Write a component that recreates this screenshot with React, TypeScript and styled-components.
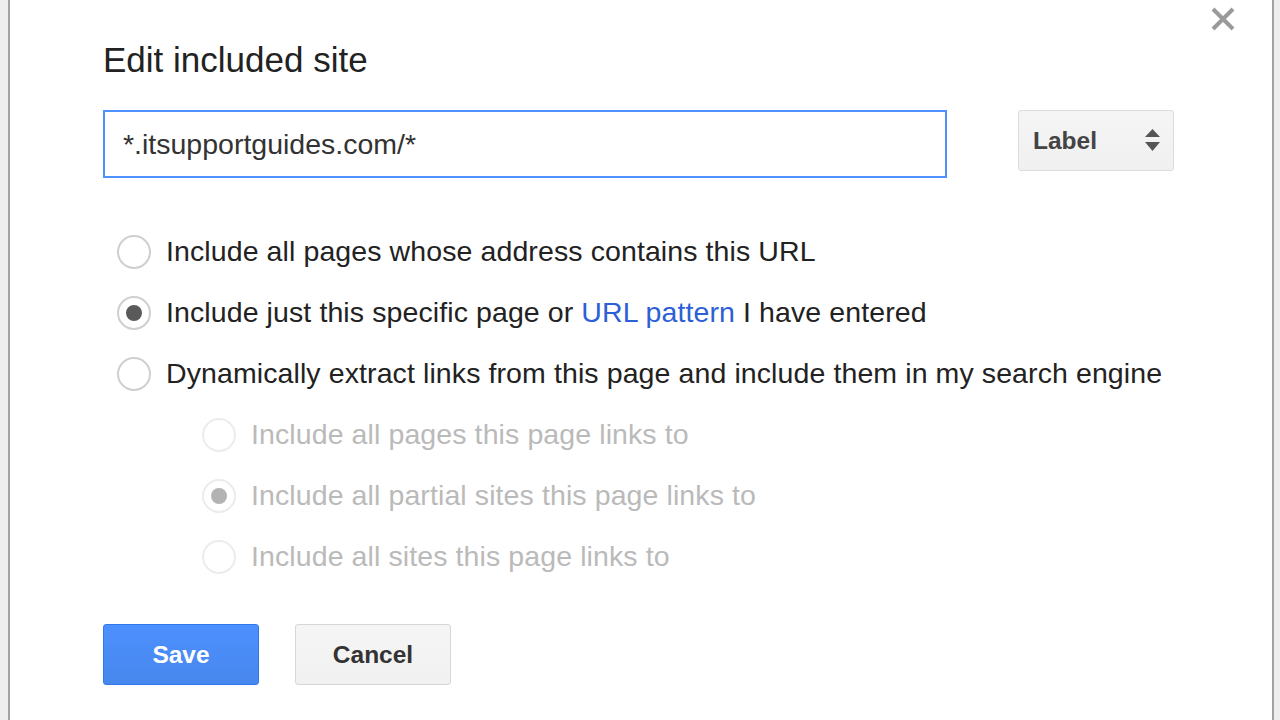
import React from 'react';
import styled, { createGlobalStyle } from 'styled-components';

const GlobalStyle = createGlobalStyle`
    html, body {
        margin: 0;
        padding: 0;
        height: 720px;
        overflow: hidden;
        background-color: #eeeeee;
        font-family: "Liberation Sans", Arial, sans-serif;
    }
`;

const Page = styled.div`
    display: flex;
    height: 720px;
    padding: 0 6px 0 8px;
`;

const Dialog = styled.div`
    position: relative;
    flex: 1;
    background-color: #ffffff;
    border-left: 2px solid #a2a2a2;
    border-right: 2px solid #a2a2a2;
    padding: 40px 0 0 93px;
`;

const CloseButton = styled.button`
    position: absolute;
    top: 6px;
    right: 36px;
    width: 26px;
    height: 26px;
    padding: 0;
    border: none;
    background: none;
    cursor: pointer;
`;

const Title = styled.h1`
    margin: 0;
    font-size: 35px;
    line-height: 40px;
    font-weight: normal;
    color: #222222;
`;

const InputRow = styled.div`
    display: flex;
    align-items: flex-start;
    gap: 71px;
    margin-top: 30px;
`;

const UrlInput = styled.input`
    box-sizing: border-box;
    width: 844px;
    height: 68px;
    padding: 0 0 0 18px;
    border: 2px solid #4d90fe;
    font-family: "Liberation Sans", Arial, sans-serif;
    font-size: 28.5px;
    color: #333333;
    outline: none;
`;

const LabelSelect = styled.div`
    box-sizing: border-box;
    display: flex;
    align-items: center;
    justify-content: space-between;
    width: 156px;
    height: 61px;
    padding: 0 12px 0 14px;
    border: 1px solid #dcdcdc;
    border-radius: 3px;
    background: linear-gradient(#f5f5f5, #f0f0f0);
    font-size: 24.5px;
    font-weight: bold;
    color: #444444;
`;

const Options = styled.div`
    display: flex;
    flex-direction: column;
    margin-top: 43px;
`;

const OptionRow = styled.label<{ $indent?: boolean; $disabled?: boolean }>`
    display: flex;
    align-items: center;
    height: 61px;
    padding-left: ${(p) => (p.$indent ? '99px' : '14px')};
    font-size: 28.5px;
    letter-spacing: 0.1px;
    color: ${(p) => (p.$disabled ? '#bababa' : '#222222')};
`;

const Radio = styled.span<{ $checked?: boolean; $disabled?: boolean }>`
    box-sizing: border-box;
    display: flex;
    align-items: center;
    justify-content: center;
    flex: none;
    width: 34px;
    height: 34px;
    margin-right: 15px;
    border-radius: 50%;
    border: 2px solid ${(p) => (p.$disabled ? '#ececec' : '#cfcfcf')};
    background-color: #ffffff;

    &::after {
        content: '';
        display: ${(p) => (p.$checked ? 'block' : 'none')};
        width: 16px;
        height: 16px;
        border-radius: 50%;
        background-color: ${(p) => (p.$disabled ? '#b3b3b3' : '#5a5a5a')};
    }
`;

const Link = styled.a`
    color: #2d5fd6;
    text-decoration: none;
    margin: 0 0.28em;
`;

const ButtonRow = styled.div`
    display: flex;
    gap: 36px;
    margin-top: 37px;
`;

const Button = styled.button<{ $primary?: boolean }>`
    box-sizing: border-box;
    width: 156px;
    height: 61px;
    border-radius: 3px;
    border: 1px solid ${(p) => (p.$primary ? '#3079ed' : '#d6d6d6')};
    background: ${(p) =>
        p.$primary ? 'linear-gradient(#4d90fe, #4787ed)' : 'linear-gradient(#f5f5f5, #f1f1f1)'};
    color: ${(p) => (p.$primary ? '#ffffff' : '#333333')};
    font-family: "Liberation Sans", Arial, sans-serif;
    font-size: 24.5px;
    font-weight: bold;
    cursor: pointer;
`;

const options = [
    { text: 'Include all pages whose address contains this URL' },
    { text: 'Include just this specific page or', link: 'URL pattern', after: 'I have entered', checked: true },
    { text: 'Dynamically extract links from this page and include them in my search engine' },
];

const subOptions = [
    { text: 'Include all pages this page links to' },
    { text: 'Include all partial sites this page links to', checked: true },
    { text: 'Include all sites this page links to' },
];

const App: React.FC = () => {
    return (
        <>
            <GlobalStyle />
            <Page>
                <Dialog>
                    <CloseButton aria-label="Close">
                        <svg width="26" height="26" viewBox="0 0 26 26">
                            <path d="M3 3 L23 23 M23 3 L3 23" stroke="#9a9a9a" strokeWidth="4" />
                        </svg>
                    </CloseButton>
                    <Title>Edit included site</Title>
                    <InputRow>
                        <UrlInput defaultValue="*.itsupportguides.com/*" />
                        <LabelSelect>
                            Label
                            <svg width="17" height="24" viewBox="0 0 17 24">
                                <path d="M8.5 0 L16 8 L1 8 Z" fill="#555555" />
                                <path d="M1 13 L16 13 L8.5 22 Z" fill="#555555" />
                            </svg>
                        </LabelSelect>
                    </InputRow>
                    <Options>
                        {options.map((o, i) => (
                            <OptionRow key={i}>
                                <Radio $checked={o.checked} />
                                {o.text}
                                {o.link && <Link href="#">{o.link}</Link>}
                                {o.after}
                            </OptionRow>
                        ))}
                        {subOptions.map((o, i) => (
                            <OptionRow key={'s' + i} $indent $disabled>
                                <Radio $checked={o.checked} $disabled />
                                {o.text}
                            </OptionRow>
                        ))}
                    </Options>
                    <ButtonRow>
                        <Button $primary>Save</Button>
                        <Button>Cancel</Button>
                    </ButtonRow>
                </Dialog>
            </Page>
        </>
    );
};

export default App;
